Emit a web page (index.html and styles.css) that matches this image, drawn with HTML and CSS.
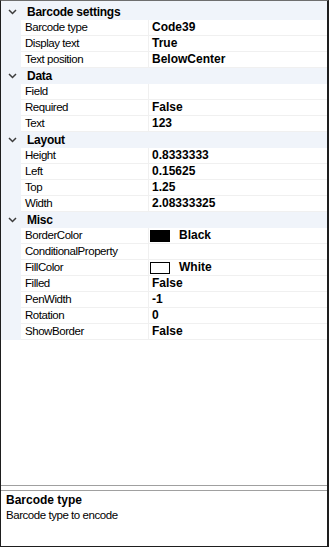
FILE: index.html
```html
<!DOCTYPE html>
<html lang="en">
    <head>
        <meta charset="UTF-8" />
        <meta name="viewport" content="width=device-width, initial-scale=1.0" />
        <title>Properties</title>
        <link rel="stylesheet" href="styles.css">
    </head>
    <body>
        <div class="frame">
            <div class="grid">
                <div class="cat">
                    <span class="chev"><svg width="9" height="6" viewBox="0 0 9 6"><polyline points="1,1 4.5,4.5 8,1" /></svg></span>
                    <span class="cat-name">Barcode settings</span>
                </div>
                <div class="row selected"><span class="gutter"></span><span class="label">Barcode type</span><span class="value">Code39</span></div>
                <div class="row"><span class="gutter"></span><span class="label">Display text</span><span class="value">True</span></div>
                <div class="row"><span class="gutter"></span><span class="label">Text position</span><span class="value">BelowCenter</span></div>

                <div class="cat">
                    <span class="chev"><svg width="9" height="6" viewBox="0 0 9 6"><polyline points="1,1 4.5,4.5 8,1" /></svg></span>
                    <span class="cat-name">Data</span>
                </div>
                <div class="row"><span class="gutter"></span><span class="label">Field</span><span class="value"></span></div>
                <div class="row"><span class="gutter"></span><span class="label">Required</span><span class="value">False</span></div>
                <div class="row"><span class="gutter"></span><span class="label">Text</span><span class="value">123</span></div>

                <div class="cat">
                    <span class="chev"><svg width="9" height="6" viewBox="0 0 9 6"><polyline points="1,1 4.5,4.5 8,1" /></svg></span>
                    <span class="cat-name">Layout</span>
                </div>
                <div class="row"><span class="gutter"></span><span class="label">Height</span><span class="value">0.8333333</span></div>
                <div class="row"><span class="gutter"></span><span class="label">Left</span><span class="value">0.15625</span></div>
                <div class="row"><span class="gutter"></span><span class="label">Top</span><span class="value">1.25</span></div>
                <div class="row"><span class="gutter"></span><span class="label">Width</span><span class="value">2.08333325</span></div>

                <div class="cat">
                    <span class="chev"><svg width="9" height="6" viewBox="0 0 9 6"><polyline points="1,1 4.5,4.5 8,1" /></svg></span>
                    <span class="cat-name">Misc</span>
                </div>
                <div class="row"><span class="gutter"></span><span class="label">BorderColor</span><span class="value"><i class="swatch black"></i>Black</span></div>
                <div class="row"><span class="gutter"></span><span class="label">ConditionalProperty</span><span class="value"></span></div>
                <div class="row"><span class="gutter"></span><span class="label">FillColor</span><span class="value"><i class="swatch white"></i>White</span></div>
                <div class="row"><span class="gutter"></span><span class="label">Filled</span><span class="value">False</span></div>
                <div class="row"><span class="gutter"></span><span class="label">PenWidth</span><span class="value">-1</span></div>
                <div class="row"><span class="gutter"></span><span class="label">Rotation</span><span class="value">0</span></div>
                <div class="row"><span class="gutter"></span><span class="label">ShowBorder</span><span class="value">False</span></div>
            </div>
            <div class="splitter"></div>
            <div class="desc">
                <div class="desc-title">Barcode type</div>
                <div class="desc-text">Barcode type to encode</div>
            </div>
        </div>
    </body>
</html>
```

FILE: styles.css
```css
body {
    margin: 0;
    background: #fff;
    font-family: "Liberation Sans", Arial, sans-serif;
    font-size: 12px;
    color: #000;
}
.frame {
    width: 329px;
    height: 547px;
    box-sizing: border-box;
    border-top: 1px solid #6e6e6e;
    border-left: 1px solid #1e1e1e;
    border-right: 2px solid #1e1e1e;
    border-bottom: 1px solid #1e1e1e;
    display: flex;
    flex-direction: column;
}
.grid {
    height: 485px;
    box-sizing: border-box;
    border-bottom: 1px solid #a0a0a0;
}
.cat {
    display: flex;
    align-items: center;
    height: 16px;
    background: #f0f4fa;
}
.cat:first-child {
    height: 19px;
    padding-top: 3px;
    box-sizing: border-box;
}
.chev {
    width: 20px;
    display: flex;
    justify-content: center;
    padding-left: 1px;
}
.chev svg {
    display: block;
}
.chev polyline {
    fill: none;
    stroke: #3c3c3c;
    stroke-width: 1.5;
}
.cat-name {
    padding-left: 5px;
    font-weight: bold;
    line-height: 15px;
    letter-spacing: -0.25px;
}
.row {
    display: flex;
    height: 16px;
}
.gutter {
    width: 20px;
    background: #f0f4fa;
}
.label,
.value {
    box-sizing: border-box;
    height: 16px;
    line-height: 15px;
    border-bottom: 1px solid #f0f0f0;
    white-space: nowrap;
    overflow: hidden;
}
.label {
    width: 128px;
    padding-left: 4px;
    border-right: 1px solid #f0f0f0;
    font-size: 11.5px;
    letter-spacing: -0.45px;
}
.value {
    flex: 1;
    padding-left: 3px;
    font-weight: bold;
    display: flex;
    align-items: center;
}
.swatch {
    display: block;
    width: 20px;
    height: 12px;
    box-sizing: border-box;
    margin-left: -2px;
    margin-right: 9px;
}
.swatch.black {
    background: #000;
}
.swatch.white {
    background: #fff;
    border: 1px solid #000;
}
.splitter {
    height: 4px;
    background: #fff;
}
.desc {
    flex: 1;
    border-top: 1px solid #a0a0a0;
    padding: 2px 5px 0;
    line-height: 15px;
}
.desc-title {
    font-weight: bold;
}
.desc-text {
    font-size: 11.5px;
    letter-spacing: -0.45px;
}
```
